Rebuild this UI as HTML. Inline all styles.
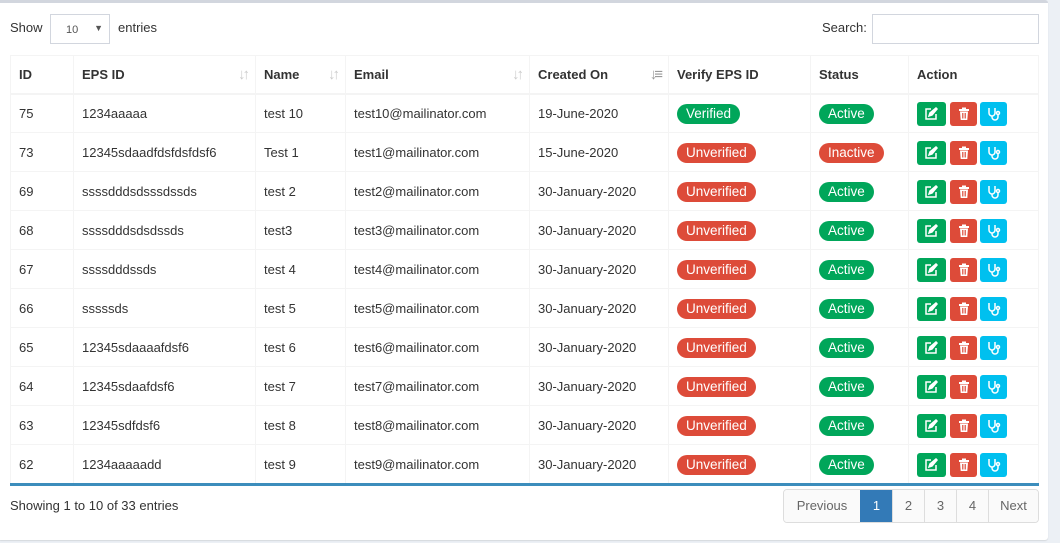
<!DOCTYPE html>
<html><head><meta charset="utf-8"><style>
*{box-sizing:border-box;margin:0;padding:0}
body{width:1060px;height:543px;background:#ecf0f5;font-family:"Liberation Sans",sans-serif;font-size:13px;color:#333;position:relative;overflow:hidden}
.box{position:absolute;left:0;top:0;width:1048px;height:540px;background:#fff;border-top:3px solid #d2d6de;border-radius:0 3px 3px 0;box-shadow:0 1px 1px rgba(0,0,0,.1)}
.abs{position:absolute}
table{position:absolute;left:10px;top:55px;border-collapse:collapse;table-layout:fixed;width:1028px}
td,th{border:1px solid #f4f4f4;padding:0 8px;height:39px;text-align:left;vertical-align:middle;white-space:nowrap;position:relative}
th{height:38px;border-bottom:2px solid #f4f4f4;font-weight:bold;font-size:13px}
tr:last-child td{border-bottom:3px solid #3c8dbc;height:40px}
.s{position:absolute;right:8px;top:10px;color:#ccc;font-size:15px;letter-spacing:-3px;font-weight:bold}
.lb{display:inline-block;color:#fff;font-size:13.5px;padding:0 9px;height:20px;border-radius:10px;line-height:20px;vertical-align:middle;margin-top:2px}
.g{background:#00a65a}.r{background:#dd4b39}.c{background:#00c0ef}
.btn{display:inline-block;width:28px;height:24px;border-radius:3px;vertical-align:middle;position:relative;margin-top:2px}
.btn svg{position:absolute;left:7px;top:5px}
.pg{position:absolute;top:489px;left:783px;height:34px;display:flex;border:1px solid #ddd;border-radius:4px;overflow:hidden}
.pg div{border-left:1px solid #ddd;background:#fafafa;color:#666;text-align:center;line-height:32px;font-size:13px}
.pg div:first-child{border-left:0}
</style></head><body>
<div class="box"></div>
<div class="abs" style="left:10px;top:20px">Show</div>
<div class="abs" style="left:50px;top:14px;width:60px;height:30px;border:1px solid #d2d6de;font-size:11px;padding:9px 0 0 15px;color:#555">10<span style="position:absolute;right:6px;top:8px;font-size:9px">▼</span></div>
<div class="abs" style="left:118px;top:20px">entries</div>
<div class="abs" style="left:822px;top:20px">Search:</div>
<div class="abs" style="left:872px;top:14px;width:167px;height:30px;border:1px solid #d2d6de"></div>
<table>
<colgroup><col style="width:63px"><col style="width:182px"><col style="width:90px"><col style="width:184px"><col style="width:139px"><col style="width:142px"><col style="width:98px"><col style="width:130px"></colgroup>
<tr><th>ID</th><th>EPS ID<span class="s">↓↑</span></th><th>Name<span class="s">↓↑</span></th><th>Email<span class="s">↓↑</span></th><th>Created On<span class="s" style="color:#999">↓≡</span></th><th>Verify EPS ID</th><th>Status</th><th>Action</th></tr>
<tbody id="tb"></tbody>
</table>
<script>
var d=[["75","1234aaaaa","test 10","test10@mailinator.com","19-June-2020",1,1],["73","12345sdaadfdsfdsfdsf6","Test 1","test1@mailinator.com","15-June-2020",0,0],["69","ssssdddsdsssdssds","test 2","test2@mailinator.com","30-January-2020",0,1],["68","ssssdddsdsdssds","test3","test3@mailinator.com","30-January-2020",0,1],["67","ssssdddssds","test 4","test4@mailinator.com","30-January-2020",0,1],["66","sssssds","test 5","test5@mailinator.com","30-January-2020",0,1],["65","12345sdaaaafdsf6","test 6","test6@mailinator.com","30-January-2020",0,1],["64","12345sdaafdsf6","test 7","test7@mailinator.com","30-January-2020",0,1],["63","12345sdfdsf6","test 8","test8@mailinator.com","30-January-2020",0,1],["62","1234aaaaadd","test 9","test9@mailinator.com","30-January-2020",0,1]];
var e='<svg width="14" height="14" viewBox="0 0 14 14" fill="none" stroke="#fff" stroke-width="1.5"><path d="M7 2H2v10h10V7"/><path d="M5 9l1-3 6-5 1 1-5 6z" fill="#fff"/></svg>';
var t='<svg width="14" height="14" viewBox="0 0 14 14" fill="#fff"><rect x="2" y="2" width="10" height="2"/><rect x="5" y="0.5" width="4" height="2"/><path d="M3 4.5h8l-.7 8.5H3.7z"/><path d="M5.5 6v5.5M7 6v5.5M8.5 6v5.5" stroke="#dd4b39" stroke-width=".8"/></svg>';
var s='<svg width="14" height="14" viewBox="0 0 14 14" fill="none" stroke="#fff" stroke-width="1.5"><path d="M2 1v5a3 3 0 0 0 6 0V1"/><path d="M5 9v1a3 3 0 0 0 6 0V8"/><circle cx="11" cy="6" r="1.5"/></svg>';
var h='';d.forEach(function(r){h+='<tr><td>'+r[0]+'</td><td>'+r[1]+'</td><td>'+r[2]+'</td><td>'+r[3]+'</td><td>'+r[4]+'</td><td>'+(r[5]?'<span class="lb g">Verified</span>':'<span class="lb r">Unverified</span>')+'</td><td>'+(r[6]?'<span class="lb g">Active</span>':'<span class="lb r">Inactive</span>')+'</td><td><span class="btn g" style="width:29px;margin-right:4px">'+e+'</span><span class="btn r" style="width:27px;margin-right:3px">'+t+'</span><span class="btn c" style="width:27px">'+s+'</span></td></tr>'});
document.getElementById('tb').innerHTML=h;
</script>
<div class="abs" style="left:10px;top:498px">Showing 1 to 10 of 33 entries</div>
<div class="pg"><div style="width:76px">Previous</div><div style="width:32px;background:#337ab7;color:#fff;border-color:#337ab7">1</div><div style="width:32px">2</div><div style="width:32px">3</div><div style="width:32px">4</div><div style="width:50px">Next</div></div>
</body></html>
